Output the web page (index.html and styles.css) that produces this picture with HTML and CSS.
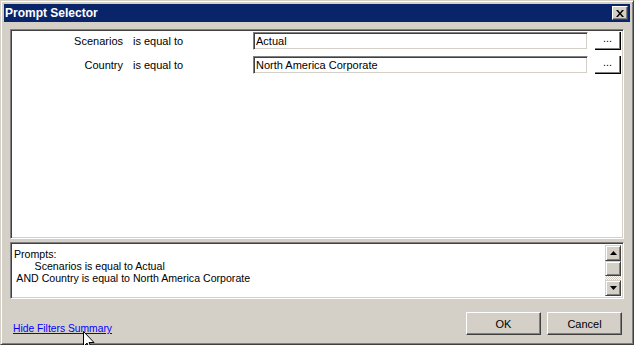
FILE: index.html
```html
<!DOCTYPE html>
<html lang="en">

<head>
    <meta charset="UTF-8">
    <title>Prompt Selector</title>
    <link rel="stylesheet" href="styles.css">
</head>

<body>
    <div class="window">
        <div class="title-bar">
            <span class="title">Prompt Selector</span>
            <button class="close-btn" aria-label="Close">
                <svg width="8" height="7" viewBox="0 0 8 7">
                    <path d="M0 0h2l2 2.5 2-2.5h2l-3 3.5 3 3.5h-2l-2-2.5-2 2.5h-2l3-3.5z" fill="#000" />
                </svg>
            </button>
        </div>

        <div class="dialog-body">
            <!-- prompt rows -->
            <div class="filters-panel">
                <div class="filter-row">
                    <span class="filter-name">Scenarios</span>
                    <span class="filter-op">is equal to</span>
                    <input class="filter-value" type="text" value="Actual">
                    <button class="browse-btn">...</button>
                </div>
                <div class="filter-row">
                    <span class="filter-name">Country</span>
                    <span class="filter-op">is equal to</span>
                    <input class="filter-value" type="text" value="North America Corporate">
                    <button class="browse-btn">...</button>
                </div>
            </div>

            <!-- summary text -->
            <div class="summary">
                <div class="summary-text">Prompts:
       Scenarios is equal to Actual
 AND Country is equal to North America Corporate</div>
                <div class="scrollbar">
                    <div class="scroll-btn">
                        <svg width="7" height="4" viewBox="0 0 7 4"><path d="M3.5 0L7 4H0z" fill="#000" /></svg>
                    </div>
                    <div class="scroll-thumb"></div>
                    <div class="scroll-track"></div>
                    <div class="scroll-btn">
                        <svg width="7" height="4" viewBox="0 0 7 4"><path d="M0 0h7L3.5 4z" fill="#000" /></svg>
                    </div>
                </div>
            </div>

            <div class="dialog-footer">
                <a href="#" class="summary-link">Hide Filters Summary</a>
                <div class="footer-buttons">
                    <button class="dlg-btn">OK</button>
                    <button class="dlg-btn">Cancel</button>
                </div>
                <svg class="cursor" width="12" height="19" viewBox="0 0 12 19">
                    <path d="M0.5 0.5v15l3.5-3.5 2.5 6 2-1-2.5-5.5h5z" fill="#fff" stroke="#000" stroke-width="1" />
                </svg>
            </div>
        </div>
    </div>
</body>

</html>
```

FILE: styles.css
```css
body {
    margin: 0;
    padding: 0;
    font-family: "Liberation Sans", Arial, sans-serif;
    font-size: 11px;
    background-color: #d4d0c8;
}

.window {
    width: 634px;
    height: 345px;
    box-sizing: border-box;
    background-color: #d4d0c8;
    border-top: 1px solid #d4d0c8;
    border-left: 1px solid #d4d0c8;
    border-right: 1px solid #404040;
    border-bottom: 1px solid #404040;
    box-shadow: inset 1px 1px 0 #fff, inset -1px -1px 0 #808080;
    padding: 3px;
    display: flex;
    flex-direction: column;
}

.title-bar {
    height: 18px;
    background-color: #0a246a;
    display: flex;
    align-items: center;
    justify-content: space-between;
    padding: 0 2px 0 1px;
}

.title {
    color: #fff;
    font-weight: bold;
    font-size: 12px;
}

.close-btn {
    width: 16px;
    height: 14px;
    padding: 0;
    background-color: #d4d0c8;
    border-top: 1px solid #fff;
    border-left: 1px solid #fff;
    border-right: 1px solid #404040;
    border-bottom: 1px solid #404040;
    box-shadow: inset -1px -1px 0 #808080;
    display: flex;
    align-items: center;
    justify-content: center;
}

.dialog-body {
    flex-grow: 1;
    padding: 7px 6px 0 6px;
    display: flex;
    flex-direction: column;
    position: relative;
}

.filters-panel,
.summary {
    background-color: #fff;
    border-top: 1px solid #808080;
    border-left: 1px solid #808080;
    border-right: 1px solid #fff;
    border-bottom: 1px solid #fff;
    box-shadow: inset 1px 1px 0 #404040, inset -1px -1px 0 #d4d0c8;
}

.filters-panel {
    height: 210px;
    box-sizing: border-box;
    padding: 2px 2px 0 2px;
    display: flex;
    flex-direction: column;
    gap: 6px;
}

.filter-row {
    display: flex;
    align-items: center;
    height: 18px;
}

.filter-name {
    width: 110px;
    text-align: right;
    color: #000;
}

.filter-op {
    width: 120px;
    padding-left: 10px;
    color: #000;
}

.filter-value {
    width: 335px;
    height: 18px;
    box-sizing: border-box;
    margin: 0;
    padding: 0 0 0 2px;
    font-family: "Liberation Sans", Arial, sans-serif;
    font-size: 11px;
    color: #000;
    background-color: #fff;
    border-top: 1px solid #808080;
    border-left: 1px solid #808080;
    border-right: 1px solid #fff;
    border-bottom: 1px solid #fff;
    box-shadow: inset 1px 1px 0 #404040, inset -1px -1px 0 #d4d0c8;
    outline: none;
}

.browse-btn {
    width: 26px;
    height: 18px;
    margin-left: 7px;
    padding: 0 0 6px 0;
    box-sizing: border-box;
    background-color: #fff;
    border: none;
    border-right: 1px solid #000;
    border-bottom: 1px solid #000;
    box-shadow: inset -1px -1px 0 #808080;
    font-family: "Liberation Sans", Arial, sans-serif;
    font-size: 11px;
    line-height: 10px;
    color: #000;
}

.summary {
    height: 57px;
    box-sizing: border-box;
    margin-top: 3px;
    padding: 2px 2px 2px 2px;
    display: flex;
}

.summary-text {
    flex-grow: 1;
    white-space: pre;
    font-size: 10.6px;
    line-height: 12px;
    padding: 3px 0 0 1px;
    color: #000;
}

.scrollbar {
    width: 16px;
    display: flex;
    flex-direction: column;
}

.scroll-btn,
.scroll-thumb {
    box-sizing: border-box;
    background-color: #d4d0c8;
    border-top: 1px solid #d4d0c8;
    border-left: 1px solid #d4d0c8;
    border-right: 1px solid #404040;
    border-bottom: 1px solid #404040;
    box-shadow: inset 1px 1px 0 #fff, inset -1px -1px 0 #808080;
}

.scroll-btn {
    height: 16px;
    display: flex;
    align-items: center;
    justify-content: center;
}

.scroll-thumb {
    height: 15px;
}

.scroll-track {
    flex-grow: 1;
    background-color: #e9e7e3;
    background-image: repeating-conic-gradient(#d4d0c8 0 25%, #fff 0 50%);
    background-size: 2px 2px;
}

.dialog-footer {
    flex-grow: 1;
    display: flex;
    justify-content: space-between;
    padding: 13px 2px 0 3px;
    position: relative;
}

.summary-link {
    color: #0000ff;
    text-decoration: underline;
    font-size: 10.3px;
    margin-top: 11px;
    align-self: flex-start;
}

.footer-buttons {
    display: flex;
    gap: 6px;
    align-self: flex-start;
}

.dlg-btn {
    width: 75px;
    height: 23px;
    box-sizing: border-box;
    background-color: #d4d0c8;
    border-top: 1px solid #fff;
    border-left: 1px solid #fff;
    border-right: 1px solid #404040;
    border-bottom: 1px solid #404040;
    box-shadow: inset -1px -1px 0 #808080;
    font-family: "Liberation Sans", Arial, sans-serif;
    font-size: 11px;
    color: #000;
    padding: 0;
}

.cursor {
    position: absolute;
    left: 73px;
    top: 32px;
}
```
